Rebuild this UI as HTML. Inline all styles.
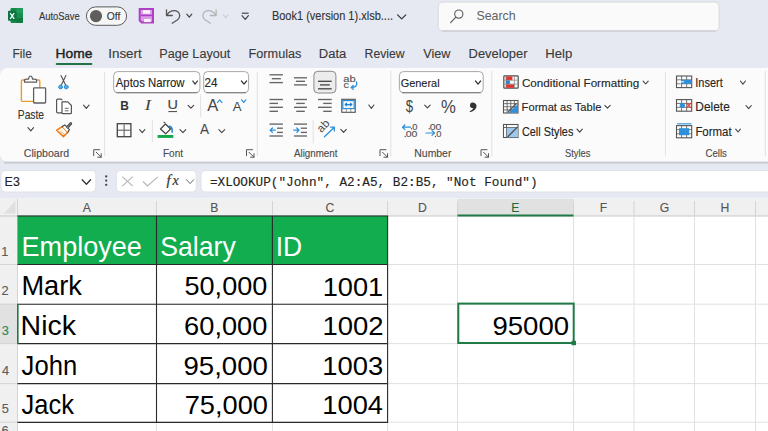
<!DOCTYPE html>
<html><head><meta charset="utf-8"><style>
html,body{margin:0;padding:0;width:768px;height:431px;overflow:hidden;background:#e6e9f1}
svg{display:block}
</style></head><body>
<svg width="768" height="431" viewBox="0 0 768 431"><rect x="0" y="0" width="768" height="431" fill="#e6e9f1" stroke="none" stroke-width="1" rx="0" /><g><rect x="10.5" y="8" width="12.5" height="15" rx="1.2" fill="#148a49"/><rect x="16.5" y="8.3" width="6.3" height="4.8" fill="#1f9d5a"/><rect x="16.5" y="13" width="6.3" height="5" fill="#178f4f"/><rect x="16.5" y="18" width="6.3" height="4.8" fill="#0f7a40"/><rect x="8" y="10.8" width="8.5" height="10" rx="0.8" fill="#0e7340"/><path d="M10.2 13.2 L14.2 18.8 M14.2 13.2 L10.2 18.8" stroke="#f4fff8" stroke-width="1.3"/></g><text x="38.90" y="19.70" font-family="Liberation Sans" font-size="10.50" font-weight="normal" font-style="normal" fill="#333" stroke="#333" stroke-width="0.12" textLength="40.74" lengthAdjust="spacingAndGlyphs" >AutoSave</text><rect x="86.4" y="6.9" width="40.2" height="18.4" fill="#f6f6f6" stroke="#5c5c5c" stroke-width="1" rx="9.2" /><circle cx="96" cy="16.1" r="6.1" fill="#5e5e5e"/><text x="106.74" y="19.70" font-family="Liberation Sans" font-size="10.50" font-weight="normal" font-style="normal" fill="#333" stroke="#333" stroke-width="0.12" textLength="13.51" lengthAdjust="spacingAndGlyphs" >Off</text><g><path d="M138.7 7.9 H154 V23.5 H141.2 L138.7 21 Z" fill="#b03fc6"/><path d="M140.7 9.9 H152 V21.5 H142 L140.7 20.2 Z" fill="#d99be6"/><rect x="142.9" y="10.1" width="7.2" height="3.6" fill="#fbf3fc"/><rect x="140.7" y="14.6" width="11.3" height="1.6" fill="#b03fc6"/><rect x="144" y="19" width="6.7" height="3.1" fill="#fbf3fc"/></g><path d="M166.5 9.8 V15.5 H172.3 M166.8 15.2 C169 11 174.5 9.2 177.8 11.8 C180.6 14 180.2 17.4 177.6 19.8 L172.2 23.2" fill="none" stroke="#555" stroke-width="1.3" stroke-linecap="round" stroke-linejoin="round"/><path d="M186.8 14.2 L189.3 17.2 L191.8 14.2" fill="none" stroke="#444" stroke-width="1.2" stroke-linecap="round" stroke-linejoin="round"/><path d="M 216.1 9.8 V 15.5 H 210.3 M 215.8 15.2 C 213.6 11.0 208.1 9.2 204.8 11.8 C 202.0 14.0 202.4 17.4 205.0 19.8 L 210.4 23.2" fill="none" stroke="#b4b4b4" stroke-width="1.3" stroke-linecap="round" stroke-linejoin="round"/><path d="M223.4 14.8 L225.7 17.6 L228 14.8" fill="none" stroke="#cdcdcd" stroke-width="1.1" stroke-linecap="round" stroke-linejoin="round"/><line x1="241.8" y1="13.2" x2="248.6" y2="13.2" stroke="#444" stroke-width="1.2"/><path d="M242 15.6 L245.2 19.3 L248.4 15.6" fill="none" stroke="#444" stroke-width="1.2" stroke-linecap="round" stroke-linejoin="round"/><text x="271.92" y="20.40" font-family="Liberation Sans" font-size="12.20" font-weight="normal" font-style="normal" fill="#333" stroke="#333" stroke-width="0.12" textLength="121.12" lengthAdjust="spacingAndGlyphs" >Book1 (version 1).xlsb....</text><path d="M397.6 14.8 L401.70000000000005 18.9 L405.8 14.8" fill="none" stroke="#333" stroke-width="1.2" stroke-linecap="round" stroke-linejoin="round"/><rect x="438.2" y="2.0" width="281" height="29" fill="#fafafa" stroke="#d6d8dc" stroke-width="1" rx="4.5" /><line x1="442" y1="31" x2="716" y2="31" stroke="#c4c6ca" stroke-width="1.2"/><circle cx="458.8" cy="14.1" r="4.1" fill="none" stroke="#5a5a5a" stroke-width="1.1"/><line x1="455.9" y1="17.1" x2="450.6" y2="22.6" stroke="#5a5a5a" stroke-width="1.2" stroke-linecap="round"/><text x="476.44" y="19.60" font-family="Liberation Sans" font-size="13.40" font-weight="normal" font-style="normal" fill="#616161" textLength="39.21" lengthAdjust="spacingAndGlyphs" >Search</text><text x="12.54" y="58.20" font-family="Liberation Sans" font-size="12.00" font-weight="normal" font-style="normal" fill="#3a3a3a" stroke="#3a3a3a" stroke-width="0.12" textLength="19.26" lengthAdjust="spacingAndGlyphs" >File</text><text x="108.19" y="58.20" font-family="Liberation Sans" font-size="12.61" font-weight="normal" font-style="normal" fill="#3a3a3a" stroke="#3a3a3a" stroke-width="0.12" textLength="33.59" lengthAdjust="spacingAndGlyphs" >Insert</text><text x="159.39" y="58.20" font-family="Liberation Sans" font-size="12.61" font-weight="normal" font-style="normal" fill="#3a3a3a" stroke="#3a3a3a" stroke-width="0.12" textLength="70.88" lengthAdjust="spacingAndGlyphs" >Page Layout</text><text x="248.59" y="58.20" font-family="Liberation Sans" font-size="12.00" font-weight="normal" font-style="normal" fill="#3a3a3a" stroke="#3a3a3a" stroke-width="0.12" textLength="52.83" lengthAdjust="spacingAndGlyphs" >Formulas</text><text x="318.76" y="58.20" font-family="Liberation Sans" font-size="12.61" font-weight="normal" font-style="normal" fill="#3a3a3a" stroke="#3a3a3a" stroke-width="0.12" textLength="27.52" lengthAdjust="spacingAndGlyphs" >Data</text><text x="364.62" y="58.20" font-family="Liberation Sans" font-size="12.00" font-weight="normal" font-style="normal" fill="#3a3a3a" stroke="#3a3a3a" stroke-width="0.12" textLength="39.96" lengthAdjust="spacingAndGlyphs" >Review</text><text x="423.24" y="58.20" font-family="Liberation Sans" font-size="12.00" font-weight="normal" font-style="normal" fill="#3a3a3a" stroke="#3a3a3a" stroke-width="0.12" textLength="27.16" lengthAdjust="spacingAndGlyphs" >View</text><text x="468.57" y="58.20" font-family="Liberation Sans" font-size="12.00" font-weight="normal" font-style="normal" fill="#3a3a3a" stroke="#3a3a3a" stroke-width="0.12" textLength="58.97" lengthAdjust="spacingAndGlyphs" >Developer</text><text x="545.20" y="58.20" font-family="Liberation Sans" font-size="12.00" font-weight="normal" font-style="normal" fill="#3a3a3a" stroke="#3a3a3a" stroke-width="0.12" textLength="27.05" lengthAdjust="spacingAndGlyphs" >Help</text><text x="55.60" y="58.20" font-family="Liberation Sans" font-size="12.61" font-weight="normal" font-style="normal" fill="#1f1f1f" stroke="#1f1f1f" stroke-width="0.4" textLength="36.76" lengthAdjust="spacingAndGlyphs" >Home</text><line x1="56.8" y1="64" x2="91.3" y2="64" stroke="#217346" stroke-width="2.2" stroke-linecap="round"/><rect x="0" y="68" width="790" height="93.8" rx="8" fill="#fbfbfb"/><line x1="4" y1="162.3" x2="768" y2="162.3" stroke="#c6c8cd" stroke-width="1.2"/><line x1="4" y1="163.5" x2="768" y2="163.5" stroke="#d6d9df" stroke-width="1.2"/><text x="23.87" y="156.60" font-family="Liberation Sans" font-size="10.34" font-weight="normal" font-style="normal" fill="#4a4a4a" stroke="#4a4a4a" stroke-width="0.12" textLength="45.22" lengthAdjust="spacingAndGlyphs" >Clipboard</text><text x="163.00" y="156.60" font-family="Liberation Sans" font-size="10.87" font-weight="normal" font-style="normal" fill="#4a4a4a" stroke="#4a4a4a" stroke-width="0.12" textLength="20.06" lengthAdjust="spacingAndGlyphs" >Font</text><text x="294.00" y="156.60" font-family="Liberation Sans" font-size="10.34" font-weight="normal" font-style="normal" fill="#4a4a4a" stroke="#4a4a4a" stroke-width="0.12" textLength="43.47" lengthAdjust="spacingAndGlyphs" >Alignment</text><text x="414.37" y="156.60" font-family="Liberation Sans" font-size="10.34" font-weight="normal" font-style="normal" fill="#4a4a4a" stroke="#4a4a4a" stroke-width="0.12" textLength="37.01" lengthAdjust="spacingAndGlyphs" >Number</text><text x="564.98" y="156.60" font-family="Liberation Sans" font-size="10.34" font-weight="normal" font-style="normal" fill="#4a4a4a" stroke="#4a4a4a" stroke-width="0.12" textLength="25.53" lengthAdjust="spacingAndGlyphs" >Styles</text><text x="705.52" y="156.60" font-family="Liberation Sans" font-size="10.34" font-weight="normal" font-style="normal" fill="#4a4a4a" stroke="#4a4a4a" stroke-width="0.12" textLength="21.29" lengthAdjust="spacingAndGlyphs" >Cells</text><line x1="104.6" y1="72" x2="104.6" y2="156" stroke="#e1e1e1" stroke-width="1"/><line x1="257.3" y1="72" x2="257.3" y2="156" stroke="#e1e1e1" stroke-width="1"/><line x1="390.8" y1="71" x2="390.8" y2="156.5" stroke="#e1e1e1" stroke-width="1"/><line x1="491.8" y1="71" x2="491.8" y2="156.5" stroke="#e1e1e1" stroke-width="1"/><line x1="665.4" y1="72" x2="665.4" y2="155.5" stroke="#e1e1e1" stroke-width="1"/><line x1="765.3" y1="71" x2="765.3" y2="156" stroke="#e1e1e1" stroke-width="1"/><g fill="none" stroke="#555" stroke-width="1" stroke-linecap="round"><path d="M93.7 155.7 V149.7 H99.7"/><path d="M96.2 152.2 L101.2 157.2 M97.7 157.2 H101.2 V153.7"/></g><g fill="none" stroke="#555" stroke-width="1" stroke-linecap="round"><path d="M246.5 155.7 V149.7 H252.5"/><path d="M249 152.2 L254 157.2 M250.5 157.2 H254 V153.7"/></g><g fill="none" stroke="#555" stroke-width="1" stroke-linecap="round"><path d="M380.0 155.7 V149.7 H386.0"/><path d="M382.5 152.2 L387.5 157.2 M384.0 157.2 H387.5 V153.7"/></g><g fill="none" stroke="#555" stroke-width="1" stroke-linecap="round"><path d="M481.0 155.7 V149.7 H487.0"/><path d="M483.5 152.2 L488.5 157.2 M485.0 157.2 H488.5 V153.7"/></g><g><rect x="21.4" y="80" width="18.4" height="21.4" rx="1.2" fill="#fff" stroke="#ea9b2c" stroke-width="1.4"/><path d="M24.5 82.2 H36.6 V80.8 C36.6 79.8 35.6 79.2 34.4 79.2 H32.5 C32.3 77 31.7 76 30.5 76 C29.3 76 28.8 77 28.6 79.2 H26.6 C25.4 79.2 24.5 79.8 24.5 80.8 Z" fill="#fff" stroke="#5f5f5f" stroke-width="1.2" stroke-linejoin="round"/><rect x="33.6" y="87.8" width="12" height="15.2" rx="0.8" fill="#fff" stroke="#5f5f5f" stroke-width="1.3"/></g><text x="17.78" y="119.40" font-family="Liberation Sans" font-size="11.88" font-weight="normal" font-style="normal" fill="#333" stroke="#333" stroke-width="0.12" textLength="26.31" lengthAdjust="spacingAndGlyphs" >Paste</text><path d="M28 127.7 L30.8 130.8 L33.6 127.7" fill="none" stroke="#424242" stroke-width="1.1" stroke-linecap="round" stroke-linejoin="round"/><g fill="none" stroke-linecap="round"><path d="M61 75.5 L65.7 85.2 M65.9 75.5 L61.2 85.2" stroke="#555" stroke-width="1.1"/><circle cx="60.6" cy="87" r="1.9" fill="#5aaee8" stroke="#2f8fd8" stroke-width="1"/><circle cx="66.2" cy="87" r="1.9" fill="#5aaee8" stroke="#2f8fd8" stroke-width="1"/></g><g fill="#fff" stroke="#555" stroke-width="1.2" stroke-linejoin="round"><path d="M62 112.8 H57.6 C57 112.8 56.6 112.4 56.6 111.8 V100.2 C56.6 99.6 57 99.2 57.6 99.2 H61 C61.6 99.2 62 99.6 62 100.2"/><path d="M62 101.9 H67.8 L71.4 105.5 V112.8 C71.4 113.3 71 113.7 70.5 113.7 H62.9 C62.4 113.7 62 113.3 62 112.8 Z"/><path d="M64.8 108.3 H68.6 M64.8 110.8 H68.6" stroke-width="0.9"/></g><path d="M83.6 105.2 L86.3 108.3 L89 105.2" fill="none" stroke="#424242" stroke-width="1.1" stroke-linecap="round" stroke-linejoin="round"/><g stroke-linejoin="round" stroke-linecap="round"><path d="M56.6 130.2 L62.3 126.6 L67.8 132.3 L63.4 136.6 Z" fill="#fff6ec" stroke="#ec7a1a" stroke-width="1.5"/><path d="M60.5 131.5 L64.5 134.5" stroke="#f3a45a" stroke-width="0.9"/><path d="M62.3 126.6 L64.8 124.9 L69.4 129.6 L67.8 132.3" fill="#fff" stroke="#4a4a4a" stroke-width="1.2"/><path d="M66.6 127 L70.3 123 C71 122.3 72 123.2 71.4 124 L67.8 128.2" fill="#fff" stroke="#4a4a4a" stroke-width="1.2"/></g><rect x="113.7" y="71.6" width="86.2" height="21.10000000000001" rx="4" fill="#fff" stroke="#a8a8a8" stroke-width="1"/><path d="M116.2 92.60000000000001 H197.4" stroke="#858585" stroke-width="1.1"/><text x="115.80" y="86.90" font-family="Liberation Sans" font-size="13.48" font-weight="normal" font-style="normal" fill="#242424" stroke="#242424" stroke-width="0.12" textLength="68.78" lengthAdjust="spacingAndGlyphs" >Aptos Narrow</text><path d="M192.8 81 L195.10000000000002 84.1 L197.4 81" fill="none" stroke="#333" stroke-width="1.2" stroke-linecap="round" stroke-linejoin="round"/><rect x="203.7" y="71.6" width="44.900000000000006" height="21.10000000000001" rx="4" fill="#fff" stroke="#a8a8a8" stroke-width="1"/><path d="M206.2 92.60000000000001 H246.1" stroke="#858585" stroke-width="1.1"/><text x="204.41" y="86.90" font-family="Liberation Sans" font-size="13.29" font-weight="normal" font-style="normal" fill="#242424" stroke="#242424" stroke-width="0.12" textLength="13.07" lengthAdjust="spacingAndGlyphs" >24</text><path d="M241.4 81 L244.0 84.1 L246.6 81" fill="none" stroke="#333" stroke-width="1.2" stroke-linecap="round" stroke-linejoin="round"/><text x="120.22" y="110.00" font-family="Liberation Sans" font-size="13.48" font-weight="bold" font-style="normal" fill="#333" textLength="8.64" lengthAdjust="spacingAndGlyphs" >B</text><text x="144.89" y="110.00" font-family="Liberation Serif" font-size="14.20" font-weight="normal" font-style="italic" fill="#444" textLength="6.22" lengthAdjust="spacingAndGlyphs" >I</text><text x="167.52" y="109.40" font-family="Liberation Sans" font-size="12.61" font-weight="normal" font-style="normal" fill="#444" stroke="#444" stroke-width="0.12" textLength="10.39" lengthAdjust="spacingAndGlyphs" >U</text><line x1="168.4" y1="111.6" x2="177" y2="111.6" stroke="#444" stroke-width="1"/><path d="M188.1 105.3 L190.89999999999998 108.2 L193.7 105.3" fill="none" stroke="#424242" stroke-width="1.1" stroke-linecap="round" stroke-linejoin="round"/><line x1="200.6" y1="94.3" x2="200.6" y2="117" stroke="#e1e1e1" stroke-width="1"/><text x="207.30" y="111.10" font-family="Liberation Sans" font-size="17.25" font-weight="normal" font-style="normal" fill="#444" textLength="11.03" lengthAdjust="spacingAndGlyphs" >A</text><path d="M217.6 102.4 L219.7 99.9 L221.8 102.4" fill="none" stroke="#3a96dd" stroke-width="1.4" stroke-linecap="round" stroke-linejoin="round"/><text x="232.80" y="111.10" font-family="Liberation Sans" font-size="13.33" font-weight="normal" font-style="normal" fill="#444" textLength="8.73" lengthAdjust="spacingAndGlyphs" >A</text><path d="M241.6 99.9 L243.7 102.4 L245.8 99.9" fill="none" stroke="#3a96dd" stroke-width="1.4" stroke-linecap="round" stroke-linejoin="round"/><g fill="none" stroke="#424242"><rect x="117.3" y="123.7" width="13.6" height="13" stroke-width="1.3"/><path d="M124.1 124.5 V136 M118 130.2 H130.3" stroke-width="1" stroke="#555"/></g><path d="M139.6 129.7 L142.2 132.6 L144.8 129.7" fill="none" stroke="#424242" stroke-width="1.1" stroke-linecap="round" stroke-linejoin="round"/><line x1="152.4" y1="119.9" x2="152.4" y2="142" stroke="#e1e1e1" stroke-width="1"/><g stroke-linejoin="round"><path d="M160.5 129 L165.5 124 L170.5 129 L165.7 133.8 Z" fill="#fff" stroke="#424242" stroke-width="1.2"/><path d="M165.3 123.2 L163.6 121.8" stroke="#424242" stroke-width="1.1"/><path d="M169.2 126.2 C171.5 126.5 172.5 128.5 172.2 132" fill="none" stroke="#1f7fd0" stroke-width="1.6" stroke-linecap="round"/></g><rect x="157.6" y="135" width="15.7" height="2.9" fill="#13a74b" stroke="none" stroke-width="1" rx="0" /><path d="M180 129.7 L182.9 132.6 L185.8 129.7" fill="none" stroke="#424242" stroke-width="1.1" stroke-linecap="round" stroke-linejoin="round"/><text x="200.00" y="133.50" font-family="Liberation Sans" font-size="15.07" font-weight="normal" font-style="normal" fill="#444" textLength="9.03" lengthAdjust="spacingAndGlyphs" >A</text><path d="M218.9 129.7 L221.8 132.6 L224.7 129.7" fill="none" stroke="#424242" stroke-width="1.1" stroke-linecap="round" stroke-linejoin="round"/><g stroke="#666666" stroke-width="1.35" stroke-linecap="butt"><line x1="269.5" y1="74.8" x2="282.9" y2="74.8"/><line x1="271.8" y1="78.7" x2="280.9" y2="78.7"/><line x1="269.5" y1="82.6" x2="282.9" y2="82.6"/></g><g stroke="#666666" stroke-width="1.35" stroke-linecap="butt"><line x1="294" y1="77.8" x2="307" y2="77.8"/><line x1="295.9" y1="81.3" x2="305" y2="81.3"/><line x1="294" y1="84.9" x2="307" y2="84.9"/></g><rect x="313.9" y="71.3" width="22" height="21.7" rx="4" fill="#ececec" stroke="#8a8a8a" stroke-width="1"/><g stroke="#4a4a4a" stroke-width="1.35" stroke-linecap="butt"><line x1="318" y1="81.3" x2="331.7" y2="81.3"/><line x1="320" y1="84.9" x2="329.8" y2="84.9"/><line x1="318" y1="88.8" x2="331.7" y2="88.8"/></g><text x="343.26" y="81.90" font-family="Liberation Sans" font-size="8.41" font-weight="normal" font-style="normal" fill="#555" stroke="#555" stroke-width="0.12" textLength="12.31" lengthAdjust="spacingAndGlyphs" >ab</text><text x="343.47" y="88.20" font-family="Liberation Sans" font-size="9.63" font-weight="normal" font-style="normal" fill="#555" stroke="#555" stroke-width="0.12" textLength="5.40" lengthAdjust="spacingAndGlyphs" >c</text><path d="M356.5 82 C357.6 85.5 355.5 87.5 351.5 87.5 M353.2 85.5 L351.2 87.5 L353.2 89.3" fill="none" stroke="#2f8fd8" stroke-width="1.4" stroke-linecap="round" stroke-linejoin="round"/><g stroke="#666666" stroke-width="1.35" stroke-linecap="butt"><line x1="269.5" y1="99.5" x2="282.9" y2="99.5"/><line x1="269.5" y1="103.4" x2="278" y2="103.4"/><line x1="269.5" y1="107.3" x2="282.9" y2="107.3"/><line x1="269.5" y1="111.3" x2="278" y2="111.3"/></g><g stroke="#666666" stroke-width="1.35" stroke-linecap="butt"><line x1="294" y1="99.5" x2="307" y2="99.5"/><line x1="296.2" y1="103.4" x2="304.8" y2="103.4"/><line x1="294" y1="107.3" x2="307" y2="107.3"/><line x1="296.2" y1="111.3" x2="304.8" y2="111.3"/></g><g stroke="#666666" stroke-width="1.35" stroke-linecap="butt"><line x1="318" y1="99.5" x2="331.7" y2="99.5"/><line x1="323.2" y1="103.4" x2="331.7" y2="103.4"/><line x1="318" y1="107.3" x2="331.7" y2="107.3"/><line x1="323.2" y1="111.3" x2="331.7" y2="111.3"/></g><g><rect x="341.8" y="99.3" width="13.4" height="13" fill="#fff" stroke="#505050" stroke-width="1.1"/><rect x="342.8" y="100.6" width="11.4" height="8" fill="#f4f9fe" stroke="#2f8fd8" stroke-width="1.2"/><path d="M346.3 108.8 V112.3 M350.8 108.8 V112.3" stroke="#7a7a7a" stroke-width="0.8"/><path d="M345.2 104.6 H351.8 M346.8 103 L345.2 104.6 L346.8 106.2 M350.2 103 L351.8 104.6 L350.2 106.2" fill="none" stroke="#1f7fd0" stroke-width="1.1"/></g><path d="M368.8 105 L371.35 108.3 L373.9 105" fill="none" stroke="#424242" stroke-width="1.1" stroke-linecap="round" stroke-linejoin="round"/><g stroke="#666666" stroke-width="1.35" stroke-linecap="butt"><line x1="269.5" y1="124.1" x2="282.9" y2="124.1"/><line x1="269.5" y1="136" x2="282.9" y2="136"/><line x1="277" y1="128.2" x2="282.9" y2="128.2"/><line x1="277" y1="132.4" x2="282.9" y2="132.4"/></g><path d="M275.2 130.2 H270.2 M272.4 128 L270.2 130.2 L272.4 132.4" fill="none" stroke="#2f8fd8" stroke-width="1.3" stroke-linecap="round" stroke-linejoin="round"/><g stroke="#666666" stroke-width="1.35" stroke-linecap="butt"><line x1="294" y1="124.1" x2="307" y2="124.1"/><line x1="294" y1="136" x2="307" y2="136"/><line x1="300.8" y1="128.2" x2="307" y2="128.2"/><line x1="300.8" y1="132.4" x2="307" y2="132.4"/></g><path d="M293.8 130.2 H299 M296.8 128 L299 130.2 L296.8 132.4" fill="none" stroke="#2f8fd8" stroke-width="1.3" stroke-linecap="round" stroke-linejoin="round"/><line x1="313.2" y1="119.8" x2="313.2" y2="143.2" stroke="#e1e1e1" stroke-width="1"/><text x="0" y="0" font-family="Liberation Sans" font-size="11.5" fill="#4a4a4a" transform="translate(321.6 133.2) rotate(-47)">ab</text><path d="M324.4 136.8 L334.3 127.2 M330.6 127.2 H334.3 V130.9" fill="none" stroke="#2f8fd8" stroke-width="1.3" stroke-linecap="round" stroke-linejoin="round"/><path d="M340.8 129.3 L343.55 132.4 L346.3 129.3" fill="none" stroke="#424242" stroke-width="1.1" stroke-linecap="round" stroke-linejoin="round"/><rect x="399.4" y="71.6" width="83.80000000000001" height="21.10000000000001" rx="4" fill="#fff" stroke="#a8a8a8" stroke-width="1"/><path d="M401.9 92.60000000000001 H480.7" stroke="#858585" stroke-width="1.1"/><text x="400.65" y="86.90" font-family="Liberation Sans" font-size="11.17" font-weight="normal" font-style="normal" fill="#242424" stroke="#242424" stroke-width="0.12" textLength="38.99" lengthAdjust="spacingAndGlyphs" >General</text><path d="M475.5 81 L478.05 84.1 L480.6 81" fill="none" stroke="#333" stroke-width="1.2" stroke-linecap="round" stroke-linejoin="round"/><text x="405.87" y="111.60" font-family="Liberation Sans" font-size="16.22" font-weight="normal" font-style="normal" fill="#444" textLength="7.35" lengthAdjust="spacingAndGlyphs" >$</text><path d="M424.7 105.1 L427.45 107.8 L430.2 105.1" fill="none" stroke="#424242" stroke-width="1.1" stroke-linecap="round" stroke-linejoin="round"/><text x="440.92" y="113.10" font-family="Liberation Sans" font-size="18.56" font-weight="normal" font-style="normal" fill="#444" textLength="14.86" lengthAdjust="spacingAndGlyphs" >%</text><path d="M472.2 102.5 C474.5 102.3 476.5 103.6 476.5 106 C476.5 109 474 111.2 470 112 L469.6 111.2 C471.8 110.4 473 109.3 473.3 108.2 C471.3 108.3 470 107.2 470 105.4 C470 103.7 471 102.6 472.2 102.5 Z" fill="#333"/><text x="412.23" y="129.50" font-family="Liberation Sans" font-size="8.43" font-weight="normal" font-style="normal" fill="#555" stroke="#555" stroke-width="0.12" textLength="5.21" lengthAdjust="spacingAndGlyphs" >0</text><circle cx="411.5" cy="128.8" r="0.7" fill="#555"/><text x="405.78" y="137.10" font-family="Liberation Sans" font-size="8.29" font-weight="normal" font-style="normal" fill="#555" stroke="#555" stroke-width="0.12" textLength="11.71" lengthAdjust="spacingAndGlyphs" >00</text><circle cx="405.2" cy="136.5" r="0.7" fill="#555"/><path d="M410.6 127.2 H402.5 M405 124.8 L402.5 127.2 L405 129.6" fill="none" stroke="#2f8fd8" stroke-width="1.2" stroke-linecap="round" stroke-linejoin="round"/><text x="429.78" y="129.50" font-family="Liberation Sans" font-size="8.43" font-weight="normal" font-style="normal" fill="#555" stroke="#555" stroke-width="0.12" textLength="11.71" lengthAdjust="spacingAndGlyphs" >00</text><circle cx="429.2" cy="128.8" r="0.7" fill="#555"/><text x="436.23" y="137.10" font-family="Liberation Sans" font-size="8.29" font-weight="normal" font-style="normal" fill="#555" stroke="#555" stroke-width="0.12" textLength="5.21" lengthAdjust="spacingAndGlyphs" >0</text><circle cx="435.5" cy="136.5" r="0.7" fill="#555"/><path d="M426 133 H434.5 M432 130.6 L434.5 133 L432 135.4" fill="none" stroke="#2f8fd8" stroke-width="1.2" stroke-linecap="round" stroke-linejoin="round"/><g><rect x="503.8" y="75.8" width="14.4" height="12.4" rx="0.8" fill="#f4f4f4" stroke="#505050" stroke-width="1.2"/><rect x="506" y="76.4" width="6.4" height="3.8" fill="#e5322d"/><rect x="506" y="80.4" width="3.8" height="3.6" fill="#1f7fd0"/><rect x="506" y="84.2" width="8.2" height="3.6" fill="#e5322d"/><path d="M503.8 80.2 H518.2 M503.8 84.1 H518.2 M506 75.8 V88.2 M514.5 75.8 V88.2" stroke="#8a8a8a" stroke-width="0.7"/></g><text x="521.92" y="87.30" font-family="Liberation Sans" font-size="11.72" font-weight="normal" font-style="normal" fill="#242424" stroke="#242424" stroke-width="0.12" textLength="117.35" lengthAdjust="spacingAndGlyphs" >Conditional Formatting</text><path d="M643.1 81.2 L645.6500000000001 84 L648.2 81.2" fill="none" stroke="#424242" stroke-width="1.1" stroke-linecap="round" stroke-linejoin="round"/><g><rect x="503.5" y="100.5" width="14.5" height="12.5" fill="none" stroke="#555" stroke-width="1.1"/><line x1="507.125" y1="100.5" x2="507.125" y2="113.0" stroke="#555" stroke-width="0.8"/><line x1="510.75" y1="100.5" x2="510.75" y2="113.0" stroke="#555" stroke-width="0.8"/><line x1="514.375" y1="100.5" x2="514.375" y2="113.0" stroke="#555" stroke-width="0.8"/><line x1="503.5" y1="103.625" x2="518.0" y2="103.625" stroke="#555" stroke-width="0.8"/><line x1="503.5" y1="106.75" x2="518.0" y2="106.75" stroke="#555" stroke-width="0.8"/><line x1="503.5" y1="109.875" x2="518.0" y2="109.875" stroke="#555" stroke-width="0.8"/><path d="M508.5 112.8 L518 112.8 L518 104 Z" fill="#2f8fd8"/><path d="M508 112 L516.5 103.5" stroke="#555" stroke-width="1.3"/></g><text x="521.61" y="111.20" font-family="Liberation Sans" font-size="11.17" font-weight="normal" font-style="normal" fill="#242424" stroke="#242424" stroke-width="0.12" textLength="79.81" lengthAdjust="spacingAndGlyphs" >Format as Table</text><path d="M604.8 105.4 L607.5 108.2 L610.2 105.4" fill="none" stroke="#424242" stroke-width="1.1" stroke-linecap="round" stroke-linejoin="round"/><g><rect x="503.5" y="124.5" width="14.5" height="13" fill="#fff" stroke="#555" stroke-width="1.1"/><path d="M503.5 127.5 H518 M506.5 124.5 V137.5" stroke="#555" stroke-width="0.9"/><rect x="506.8" y="127.8" width="11" height="9.5" fill="#9cc8ee"/><path d="M507.5 137 L517.5 127" stroke="#555" stroke-width="1.3"/></g><text x="521.96" y="135.60" font-family="Liberation Sans" font-size="12.14" font-weight="normal" font-style="normal" fill="#242424" stroke="#242424" stroke-width="0.12" textLength="51.41" lengthAdjust="spacingAndGlyphs" >Cell Styles</text><path d="M577 129.1 L579.65 132.1 L582.3 129.1" fill="none" stroke="#424242" stroke-width="1.1" stroke-linecap="round" stroke-linejoin="round"/><g><rect x="676.5" y="76" width="15.2" height="11.6" fill="none" stroke="#555" stroke-width="1.1"/><line x1="681.5666666666667" y1="76" x2="681.5666666666667" y2="87.6" stroke="#555" stroke-width="0.8"/><line x1="686.6333333333333" y1="76" x2="686.6333333333333" y2="87.6" stroke="#555" stroke-width="0.8"/><line x1="676.5" y1="79.86666666666666" x2="691.7" y2="79.86666666666666" stroke="#555" stroke-width="0.8"/><line x1="676.5" y1="83.73333333333333" x2="691.7" y2="83.73333333333333" stroke="#555" stroke-width="0.8"/><rect x="681.5" y="79.8" width="10" height="4" fill="#2f8fd8"/><path d="M684 81.8 H678.5 M680.5 79.8 L678.5 81.8 L680.5 83.8" fill="none" stroke="#fff" stroke-width="1"/></g><text x="695.31" y="86.90" font-family="Liberation Sans" font-size="12.90" font-weight="normal" font-style="normal" fill="#242424" stroke="#242424" stroke-width="0.12" textLength="27.45" lengthAdjust="spacingAndGlyphs" >Insert</text><path d="M740.4 81 L742.95 84.1 L745.5 81" fill="none" stroke="#424242" stroke-width="1.1" stroke-linecap="round" stroke-linejoin="round"/><g><rect x="676.5" y="99.6" width="15.2" height="11.6" fill="none" stroke="#555" stroke-width="1.1"/><line x1="681.5666666666667" y1="99.6" x2="681.5666666666667" y2="111.19999999999999" stroke="#555" stroke-width="0.8"/><line x1="686.6333333333333" y1="99.6" x2="686.6333333333333" y2="111.19999999999999" stroke="#555" stroke-width="0.8"/><line x1="676.5" y1="103.46666666666665" x2="691.7" y2="103.46666666666665" stroke="#555" stroke-width="0.8"/><line x1="676.5" y1="107.33333333333333" x2="691.7" y2="107.33333333333333" stroke="#555" stroke-width="0.8"/><circle cx="682.3" cy="105.4" r="2.6" fill="#2f8fd8"/><path d="M686.5 103 L691 107.8 M691 103 L686.5 107.8" stroke="#e8413c" stroke-width="1.2"/></g><text x="695.35" y="111.30" font-family="Liberation Sans" font-size="11.86" font-weight="normal" font-style="normal" fill="#242424" stroke="#242424" stroke-width="0.12" textLength="34.40" lengthAdjust="spacingAndGlyphs" >Delete</text><path d="M746 105.5 L748.65 108.6 L751.3 105.5" fill="none" stroke="#424242" stroke-width="1.1" stroke-linecap="round" stroke-linejoin="round"/><g><rect x="676.5" y="125.6" width="15.2" height="12.2" fill="none" stroke="#555" stroke-width="1.1"/><line x1="681.5666666666667" y1="125.6" x2="681.5666666666667" y2="137.79999999999998" stroke="#555" stroke-width="0.8"/><line x1="686.6333333333333" y1="125.6" x2="686.6333333333333" y2="137.79999999999998" stroke="#555" stroke-width="0.8"/><line x1="676.5" y1="129.66666666666666" x2="691.7" y2="129.66666666666666" stroke="#555" stroke-width="0.8"/><line x1="676.5" y1="133.73333333333332" x2="691.7" y2="133.73333333333332" stroke="#555" stroke-width="0.8"/><rect x="679" y="128.2" width="10.2" height="7" fill="#2f8fd8"/><path d="M677 123.8 H691.5" stroke="#2f8fd8" stroke-width="1.1"/></g><text x="695.38" y="135.60" font-family="Liberation Sans" font-size="12.75" font-weight="normal" font-style="normal" fill="#242424" stroke="#242424" stroke-width="0.12" textLength="36.30" lengthAdjust="spacingAndGlyphs" >Format</text><path d="M735.7 129.2 L738.05 132 L740.4 129.2" fill="none" stroke="#424242" stroke-width="1.1" stroke-linecap="round" stroke-linejoin="round"/><rect x="1" y="170.5" width="94.8" height="21.5" rx="4" fill="#fff" stroke="#dfe1e5" stroke-width="1"/><text x="4.60" y="185.60" font-family="Liberation Sans" font-size="13.57" font-weight="normal" font-style="normal" fill="#242424" stroke="#242424" stroke-width="0.12" textLength="15.23" lengthAdjust="spacingAndGlyphs" >E3</text><path d="M82.2 179.8 L86.4 184.3 L90.6 179.8" fill="none" stroke="#333" stroke-width="1.3" stroke-linecap="round" stroke-linejoin="round"/><circle cx="106.2" cy="176.4" r="1.15" fill="#444"/><circle cx="106.2" cy="180.6" r="1.15" fill="#444"/><circle cx="106.2" cy="184.8" r="1.15" fill="#444"/><rect x="116.3" y="170.5" width="80" height="21.5" rx="4" fill="#fff" stroke="#dfe1e5" stroke-width="1"/><path d="M122.2 176.6 L132.8 186.2 M132.8 176.6 L122.2 186.2" stroke="#b5b5b5" stroke-width="1.1"/><path d="M143 181.5 L147.5 186 L157.8 176.8" fill="none" stroke="#b5b5b5" stroke-width="1.1"/><text x="166.45" y="184.80" font-family="Liberation Serif" font-size="14.80" font-weight="normal" font-style="italic" fill="#333" stroke="#333" stroke-width="0.2" textLength="4.11" lengthAdjust="spacingAndGlyphs" >f</text><text x="172.41" y="184.90" font-family="Liberation Serif" font-size="14.20" font-weight="normal" font-style="italic" fill="#333" stroke="#333" stroke-width="0.2" textLength="6.30" lengthAdjust="spacingAndGlyphs" >x</text><path d="M186.4 179.6 L190.10000000000002 183.6 L193.8 179.6" fill="none" stroke="#6a6a6a" stroke-width="1" stroke-linecap="round" stroke-linejoin="round"/><rect x="201" y="170.5" width="600" height="21.5" rx="4" fill="#fff" stroke="#dfe1e5" stroke-width="1"/><text x="209.90" y="186.00" font-family="Liberation Mono" font-size="12.55" font-weight="normal" font-style="normal" fill="#242424" stroke="#242424" stroke-width="0.12" textLength="327.67" lengthAdjust="spacingAndGlyphs" >=XLOOKUP(&quot;John&quot;, A2:A5, B2:B5, &quot;Not Found&quot;)</text><rect x="0" y="198.5" width="768" height="233" fill="#ffffff" stroke="none" stroke-width="1" rx="0" /><rect x="0" y="198.8" width="768" height="17.2" fill="#f0f0f0" stroke="none" stroke-width="1" rx="0" /><rect x="0" y="198.5" width="17" height="233" fill="#f0f0f0" stroke="none" stroke-width="1" rx="0" /><rect x="457.5" y="198.8" width="116" height="17.2" fill="#e1e1e1" stroke="none" stroke-width="1" rx="0" /><rect x="0" y="303.8" width="17" height="39.7" fill="#e1e1e1" stroke="none" stroke-width="1" rx="0" /><path d="M15.5 200.8 V213.5 H3.8 Z" fill="#e0e0e0"/><line x1="156.5" y1="201" x2="156.5" y2="215.5" stroke="#d4d4d4" stroke-width="1"/><line x1="272.5" y1="201" x2="272.5" y2="215.5" stroke="#d4d4d4" stroke-width="1"/><line x1="387.5" y1="201" x2="387.5" y2="215.5" stroke="#d4d4d4" stroke-width="1"/><line x1="457.5" y1="201" x2="457.5" y2="215.5" stroke="#d4d4d4" stroke-width="1"/><line x1="573.5" y1="201" x2="573.5" y2="215.5" stroke="#d4d4d4" stroke-width="1"/><line x1="634" y1="201" x2="634" y2="215.5" stroke="#d4d4d4" stroke-width="1"/><line x1="694.5" y1="201" x2="694.5" y2="215.5" stroke="#d4d4d4" stroke-width="1"/><line x1="755.5" y1="201" x2="755.5" y2="215.5" stroke="#d4d4d4" stroke-width="1"/><line x1="17.5" y1="198.5" x2="17.5" y2="431" stroke="#d4d4d4" stroke-width="1"/><line x1="0" y1="216" x2="768" y2="216" stroke="#c8c8c8" stroke-width="1"/><line x1="0" y1="264.5" x2="17" y2="264.5" stroke="#d4d4d4" stroke-width="1"/><line x1="0" y1="304.2" x2="17" y2="304.2" stroke="#d4d4d4" stroke-width="1"/><line x1="0" y1="343.6" x2="17" y2="343.6" stroke="#d4d4d4" stroke-width="1"/><line x1="0" y1="383.6" x2="17" y2="383.6" stroke="#d4d4d4" stroke-width="1"/><line x1="0" y1="422.2" x2="17" y2="422.2" stroke="#d4d4d4" stroke-width="1"/><line x1="156.5" y1="216" x2="156.5" y2="431" stroke="#e1e1e1" stroke-width="1"/><line x1="272.5" y1="216" x2="272.5" y2="431" stroke="#e1e1e1" stroke-width="1"/><line x1="387.5" y1="216" x2="387.5" y2="431" stroke="#e1e1e1" stroke-width="1"/><line x1="457.5" y1="216" x2="457.5" y2="431" stroke="#e1e1e1" stroke-width="1"/><line x1="573.5" y1="216" x2="573.5" y2="431" stroke="#e1e1e1" stroke-width="1"/><line x1="634" y1="216" x2="634" y2="431" stroke="#e1e1e1" stroke-width="1"/><line x1="694.5" y1="216" x2="694.5" y2="431" stroke="#e1e1e1" stroke-width="1"/><line x1="755.5" y1="216" x2="755.5" y2="431" stroke="#e1e1e1" stroke-width="1"/><line x1="17.5" y1="264.5" x2="768" y2="264.5" stroke="#e1e1e1" stroke-width="1"/><line x1="17.5" y1="304.2" x2="768" y2="304.2" stroke="#e1e1e1" stroke-width="1"/><line x1="17.5" y1="343.6" x2="768" y2="343.6" stroke="#e1e1e1" stroke-width="1"/><line x1="17.5" y1="383.6" x2="768" y2="383.6" stroke="#e1e1e1" stroke-width="1"/><line x1="17.5" y1="422.2" x2="768" y2="422.2" stroke="#e1e1e1" stroke-width="1"/><text x="82.69" y="212.00" font-family="Liberation Sans" font-size="12.75" font-weight="normal" font-style="normal" fill="#555" stroke="#555" stroke-width="0.12" textLength="8.14" lengthAdjust="spacingAndGlyphs" >A</text><text x="210.26" y="212.00" font-family="Liberation Sans" font-size="12.75" font-weight="normal" font-style="normal" fill="#555" stroke="#555" stroke-width="0.12" textLength="8.14" lengthAdjust="spacingAndGlyphs" >B</text><text x="325.52" y="212.00" font-family="Liberation Sans" font-size="12.57" font-weight="normal" font-style="normal" fill="#555" stroke="#555" stroke-width="0.12" textLength="8.81" lengthAdjust="spacingAndGlyphs" >C</text><text x="417.89" y="212.00" font-family="Liberation Sans" font-size="12.75" font-weight="normal" font-style="normal" fill="#555" stroke="#555" stroke-width="0.12" textLength="8.81" lengthAdjust="spacingAndGlyphs" >D</text><text x="511.20" y="212.00" font-family="Liberation Sans" font-size="12.75" font-weight="normal" font-style="normal" fill="#1e6b3f" stroke="#1e6b3f" stroke-width="0.12" textLength="8.14" lengthAdjust="spacingAndGlyphs" >E</text><text x="599.78" y="212.00" font-family="Liberation Sans" font-size="12.75" font-weight="normal" font-style="normal" fill="#555" stroke="#555" stroke-width="0.12" textLength="7.45" lengthAdjust="spacingAndGlyphs" >F</text><text x="659.64" y="212.00" font-family="Liberation Sans" font-size="12.57" font-weight="normal" font-style="normal" fill="#555" stroke="#555" stroke-width="0.12" textLength="9.49" lengthAdjust="spacingAndGlyphs" >G</text><text x="720.61" y="212.00" font-family="Liberation Sans" font-size="12.75" font-weight="normal" font-style="normal" fill="#555" stroke="#555" stroke-width="0.12" textLength="8.81" lengthAdjust="spacingAndGlyphs" >H</text><text x="1.24" y="255.50" font-family="Liberation Sans" font-size="12.80" font-weight="normal" font-style="normal" fill="#5a5a5a" stroke="#5a5a5a" stroke-width="0.12" textLength="7.12" lengthAdjust="spacingAndGlyphs" >1</text><text x="1.56" y="295.20" font-family="Liberation Sans" font-size="12.80" font-weight="normal" font-style="normal" fill="#5a5a5a" stroke="#5a5a5a" stroke-width="0.12" textLength="7.12" lengthAdjust="spacingAndGlyphs" >2</text><text x="1.69" y="334.60" font-family="Liberation Sans" font-size="12.80" font-weight="normal" font-style="normal" fill="#2e8b57" stroke="#2e8b57" stroke-width="0.12" textLength="7.12" lengthAdjust="spacingAndGlyphs" >3</text><text x="1.94" y="374.60" font-family="Liberation Sans" font-size="12.80" font-weight="normal" font-style="normal" fill="#5a5a5a" stroke="#5a5a5a" stroke-width="0.12" textLength="7.12" lengthAdjust="spacingAndGlyphs" >4</text><text x="1.69" y="413.20" font-family="Liberation Sans" font-size="12.80" font-weight="normal" font-style="normal" fill="#5a5a5a" stroke="#5a5a5a" stroke-width="0.12" textLength="7.12" lengthAdjust="spacingAndGlyphs" >5</text><text x="1.56" y="435.00" font-family="Liberation Sans" font-size="12.80" font-weight="normal" font-style="normal" fill="#5a5a5a" stroke="#5a5a5a" stroke-width="0.12" textLength="7.12" lengthAdjust="spacingAndGlyphs" >6</text><rect x="17.5" y="215.8" width="370" height="48.7" fill="#11ad4e" stroke="none" stroke-width="1" rx="0" /><g stroke="#2a2a2a" stroke-width="1.1" fill="none"><path d="M17.5 216 H387.6 V422.4 H17.5"/><line x1="17.5" y1="264.5" x2="387.6" y2="264.5"/><line x1="17.5" y1="304.2" x2="387.6" y2="304.2"/><line x1="17.5" y1="343.6" x2="387.6" y2="343.6"/><line x1="17.5" y1="383.6" x2="387.6" y2="383.6"/><line x1="156.5" y1="216" x2="156.5" y2="422.4"/><line x1="272.4" y1="216" x2="272.4" y2="422.4"/></g><text x="21.59" y="255.80" font-family="Liberation Sans" font-size="27.80" font-weight="normal" font-style="normal" fill="#ffffff" textLength="120.28" lengthAdjust="spacingAndGlyphs" >Employee</text><text x="160.30" y="255.60" font-family="Liberation Sans" font-size="27.80" font-weight="normal" font-style="normal" fill="#ffffff" textLength="75.49" lengthAdjust="spacingAndGlyphs" >Salary</text><text x="275.72" y="255.60" font-family="Liberation Sans" font-size="27.80" font-weight="normal" font-style="normal" fill="#ffffff" textLength="26.47" lengthAdjust="spacingAndGlyphs" >ID</text><text x="21.42" y="295.30" font-family="Liberation Sans" font-size="27.80" font-weight="normal" font-style="normal" fill="#000" textLength="60.54" lengthAdjust="spacingAndGlyphs" >Mark</text><text x="20.62" y="335.00" font-family="Liberation Sans" font-size="27.80" font-weight="normal" font-style="normal" fill="#000" textLength="55.36" lengthAdjust="spacingAndGlyphs" >Nick</text><text x="21.62" y="374.70" font-family="Liberation Sans" font-size="27.80" font-weight="normal" font-style="normal" fill="#000" textLength="55.54" lengthAdjust="spacingAndGlyphs" >John</text><text x="21.62" y="413.70" font-family="Liberation Sans" font-size="27.80" font-weight="normal" font-style="normal" fill="#000" textLength="52.41" lengthAdjust="spacingAndGlyphs" >Jack</text><text x="184.52" y="295.30" font-family="Liberation Sans" font-size="26.50" font-weight="normal" font-style="normal" fill="#000" textLength="82.79" lengthAdjust="spacingAndGlyphs" >50,000</text><text x="184.14" y="335.00" font-family="Liberation Sans" font-size="26.50" font-weight="normal" font-style="normal" fill="#000" textLength="83.28" lengthAdjust="spacingAndGlyphs" >60,000</text><text x="183.46" y="374.70" font-family="Liberation Sans" font-size="26.50" font-weight="normal" font-style="normal" fill="#000" textLength="84.47" lengthAdjust="spacingAndGlyphs" >95,000</text><text x="184.74" y="413.70" font-family="Liberation Sans" font-size="26.50" font-weight="normal" font-style="normal" fill="#000" textLength="83.18" lengthAdjust="spacingAndGlyphs" >75,000</text><text x="322.66" y="295.60" font-family="Liberation Sans" font-size="26.50" font-weight="normal" font-style="normal" fill="#000" textLength="60.56" lengthAdjust="spacingAndGlyphs" >1001</text><text x="322.54" y="335.00" font-family="Liberation Sans" font-size="26.50" font-weight="normal" font-style="normal" fill="#000" textLength="61.02" lengthAdjust="spacingAndGlyphs" >1002</text><text x="322.35" y="374.70" font-family="Liberation Sans" font-size="26.50" font-weight="normal" font-style="normal" fill="#000" textLength="60.94" lengthAdjust="spacingAndGlyphs" >1003</text><text x="322.36" y="413.70" font-family="Liberation Sans" font-size="26.50" font-weight="normal" font-style="normal" fill="#000" textLength="60.65" lengthAdjust="spacingAndGlyphs" >1004</text><text x="492.46" y="334.70" font-family="Liberation Sans" font-size="26.50" font-weight="normal" font-style="normal" fill="#000" textLength="76.63" lengthAdjust="spacingAndGlyphs" >95000</text><rect x="458.3" y="303.6" width="115.4" height="39.4" fill="none" stroke="#1f7a45" stroke-width="2"/><rect x="571.6" y="340.8" width="4.4" height="4.4" fill="#1f7a45" stroke="none" stroke-width="1" rx="0" /><rect x="17" y="303.8" width="1.6" height="39.8" fill="#1f7a45" stroke="none" stroke-width="1" rx="0" /><line x1="457.5" y1="215.6" x2="573.5" y2="215.6" stroke="#1f7a45" stroke-width="2"/></svg>
</body></html>
